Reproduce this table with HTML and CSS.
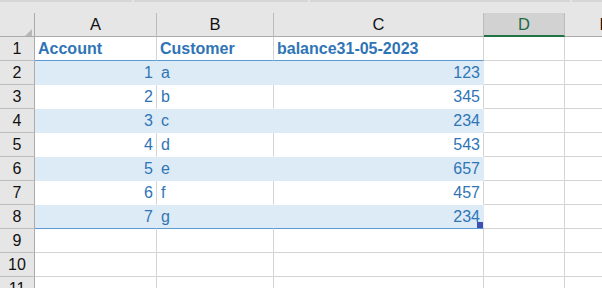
FILE: index.html
```html
<!DOCTYPE html>
<html>
<head>
<meta charset="utf-8">
<link rel="stylesheet" href="styles.css">
</head>
<body>
<div class="topbar">
  <span class="seg seg-1"></span>
  <span class="seg seg-2"></span>
  <span class="seg seg-3"></span>
  <span class="seg seg-4"></span>
</div>
<div class="sheet">
  <div class="corner"><svg class="corner-tri" width="18" height="18" viewBox="0 0 18 18"><polygon points="17,0 17,17 0,17" fill="#b7b7b7"/></svg></div>
  <div class="colhead">A</div>
  <div class="colhead">B</div>
  <div class="colhead">C</div>
  <div class="colhead active">D</div>
  <div class="colhead">E</div>

  <div class="rowhead">1</div>
  <div class="cell th">Account</div>
  <div class="cell th">Customer</div>
  <div class="cell th">balance31-05-2023</div>
  <div class="cell"></div>
  <div class="cell"></div>

  <div class="rowhead">2</div>
  <div class="cell td band num">1</div>
  <div class="cell td band">a</div>
  <div class="cell td band num">123</div>
  <div class="cell"></div>
  <div class="cell"></div>

  <div class="rowhead">3</div>
  <div class="cell td num">2</div>
  <div class="cell td">b</div>
  <div class="cell td num">345</div>
  <div class="cell"></div>
  <div class="cell"></div>

  <div class="rowhead">4</div>
  <div class="cell td band num">3</div>
  <div class="cell td band">c</div>
  <div class="cell td band num">234</div>
  <div class="cell"></div>
  <div class="cell"></div>

  <div class="rowhead">5</div>
  <div class="cell td num">4</div>
  <div class="cell td">d</div>
  <div class="cell td num">543</div>
  <div class="cell"></div>
  <div class="cell"></div>

  <div class="rowhead">6</div>
  <div class="cell td band num">5</div>
  <div class="cell td band">e</div>
  <div class="cell td band num">657</div>
  <div class="cell"></div>
  <div class="cell"></div>

  <div class="rowhead">7</div>
  <div class="cell td num">6</div>
  <div class="cell td">f</div>
  <div class="cell td num">457</div>
  <div class="cell"></div>
  <div class="cell"></div>

  <div class="rowhead">8</div>
  <div class="cell td band last num">7</div>
  <div class="cell td band last">g</div>
  <div class="cell td band last num has-handle">234<span class="handle"></span></div>
  <div class="cell"></div>
  <div class="cell"></div>

  <div class="rowhead">9</div>
  <div class="cell"></div><div class="cell"></div><div class="cell"></div><div class="cell"></div><div class="cell"></div>

  <div class="rowhead">10</div>
  <div class="cell"></div><div class="cell"></div><div class="cell"></div><div class="cell"></div><div class="cell"></div>

  <div class="rowhead">11</div>
  <div class="cell"></div><div class="cell"></div><div class="cell"></div><div class="cell"></div><div class="cell"></div>
</div>
</body>
</html>
```

FILE: styles.css
```css
html, body {
  margin: 0;
  padding: 0;
  overflow: hidden;
  background: #ffffff;
}

body {
  width: 602px;
  height: 288px;
  font-family: "Liberation Sans", Arial, sans-serif;
  font-size: 16px;
}

/* strip above the column headers */
.topbar {
  height: 13px;
  background: #e6e6e6;
  display: flex;
  gap: 2px;
  align-items: flex-start;
}

.topbar .seg {
  height: 2px;
  background: #d6d6d6;
}

.seg-1 { width: 132px; }
.seg-2 { width: 174px; }
.seg-3 { width: 260px; }
.seg-4 { flex: 1; }

.sheet {
  display: grid;
  grid-template-columns: 35px 122px 117px 210px 81px 81px;
  grid-auto-rows: 24px;
  width: 646px;
}

.sheet > div {
  box-sizing: border-box;
  border-right: 1px solid #d4d4d4;
  border-bottom: 1px solid #d4d4d4;
  line-height: 22px;
  padding-top: 1px;
  white-space: nowrap;
  overflow: hidden;
}

.corner {
  position: relative;
  background: #e6e6e6;
  border-right-color: #ababab !important;
  border-bottom-color: #ababab !important;
}

.corner-tri {
  position: absolute;
  left: 15px;
  top: 16px;
}

.colhead {
  background: #e6e6e6;
  color: #111111;
  text-align: center;
  font-size: 16.5px;
  border-right-color: #bcbcbc !important;
  border-bottom-color: #ababab !important;
  line-height: 23px !important;
  padding-top: 0 !important;
}

.colhead.active {
  background: #d2d2d2;
  color: #1d6b3f;
  border-bottom: 2px solid #217346 !important;
}

.rowhead {
  background: #e6e6e6;
  color: #111111;
  text-align: center;
  border-right-color: #ababab !important;
  border-bottom-color: #bdbdbd !important;
}

.cell {
  padding-left: 3px;
  padding-right: 3px;
  color: #2f75b5;
}

.th {
  font-weight: bold;
  border-bottom-color: #5b9bd5 !important;
}

.td {
  border-bottom-color: #ffffff !important;
}

.td.band {
  background: #ddebf7;
  border-right-color: #ddebf7;
  border-bottom-color: #ddebf7 !important;
}

.td.last {
  border-bottom-color: #5b9bd5 !important;
}

.num {
  text-align: right;
}

.td:not(.num) {
  padding-left: 4px;
}

/* fill handle of the active selection */
.sheet > .has-handle {
  position: relative;
  overflow: visible;
}

.handle {
  position: absolute;
  right: 0;
  bottom: 0;
  width: 6px;
  height: 6px;
  background: #3f51b0;
}
```
